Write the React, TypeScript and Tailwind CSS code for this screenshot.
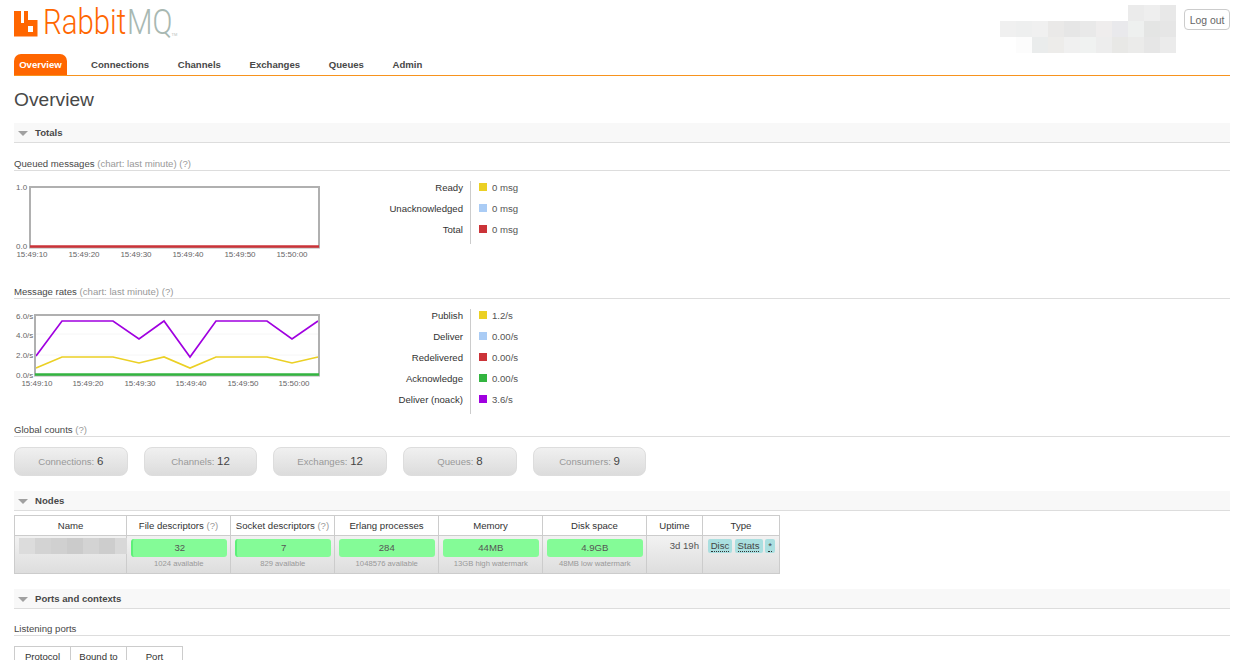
const font = "font-['Liberation_Sans',Arial,sans-serif]";

const tabs = ["Connections", "Channels", "Exchanges", "Queues", "Admin"];

const blurRows = [
  ["#ebebeb", "#eeeeee", "#e8e8e8"],
  ["#f0f0f0", "#eeefef", "#f0f0f0", "#eae9e8", "#e6e6e6", "#e9e9e9", "#efeded", "#e9e9ec", "#eef0ef", "#e4e5e4", "#e6e6e6"],
  ["#fcfcfc", "#eaecec", "#edecea", "#f0f0f0", "#f0f2f1", "#ededed", "#e8e8e6", "#ebebea", "#e6e6e6", "#ebebeb"],
];

const nameBlur = ["#dcdcdc", "#d3d3d3", "#d0d0d0", "#cbcbcb", "#d3d3d3", "#cdcdcd", "#d8d8d8"];

function Logo() {
  return (
    <div className="flex items-start">
      <svg width="24" height="26" viewBox="0 0 24 26" className="mt-[11px] shrink-0">
        <path
          fill="#ff6600"
          fillRule="evenodd"
          d="M0 0H7V12H10V0H14V9H23.5V25.5H0ZM14 15V21H19V15Z"
        />
      </svg>
      <div className="mt-[3px] ml-[4.5px] flex h-[40px] w-[128px] origin-left scale-x-[0.84] items-start font-['Roboto',sans-serif] text-[35px] leading-[40px] font-light">
        <span className="text-[#ff6600]">Rabbit</span>
        <span className="ml-[1px] text-[#a8b8b2]">MQ</span>
      </div>
      <span className="mt-[33px] ml-[1px] text-[4px] leading-[4px] text-[#b4c0bb]">TM</span>
    </div>
  );
}

function Section({ title }: { title: string }) {
  return (
    <div className="flex h-[20px] items-center border-b border-[#dddddd] bg-[#f8f8f8] pl-[4px]">
      <svg width="10" height="5" viewBox="0 0 10 5" className="mt-[1px]">
        <path d="M0 0H10L5 5Z" fill="#a0a0a0" />
      </svg>
      <span className="mt-px ml-[7px] text-[9.6px] font-bold text-[#484848]">{title}</span>
    </div>
  );
}

function SubHead({ title, note, help = true }: { title: string; note?: string; help?: boolean }) {
  return (
    <div className="h-[14px] border-b border-[#dddddd] text-[9.6px] leading-[14px] text-[#484848]">
      {title}{" "}
      {help && <span className="text-[#999999]">{note ? `(${note}) ` : ""}(?)</span>}
    </div>
  );
}

function Legend({ rows }: { rows: { label: string; value: string; color: string }[] }) {
  return (
    <div className="text-[9.6px] leading-[14px]">
      {rows.map((r) => (
        <div key={r.label} className="flex h-[21px]">
          <div className="w-[143px] text-right text-[#333333]">{r.label}</div>
          <div className="ml-[7px] flex items-start border-l border-[#cccccc] pl-[8px]">
            <span className="mt-[2px] mr-[5px] h-[8px] w-[8px]" style={{ backgroundColor: r.color }} />
            <span className="text-[#555555]">{r.value}</span>
          </div>
        </div>
      ))}
    </div>
  );
}

function QueuedChart() {
  const ticks = [18, 70, 122, 174, 226, 278];
  const labels = ["15:49:10", "15:49:20", "15:49:30", "15:49:40", "15:49:50", "15:50:00"];
  return (
    <svg width="306" height="82" viewBox="0 0 306 82" className="shrink-0">
      <rect x="16" y="6" width="289" height="60.5" fill="#fff" stroke="#b0b0b0" strokeWidth="2" />
      <line x1="16" x2="305" y1="65.5" y2="65.5" stroke="#cb3338" strokeWidth="2.5" />
      <g fontSize="8" fill="#666" fontFamily="Liberation Sans">
        <text x="2" y="9">1.0</text>
        <text x="2" y="68">0.0</text>
        {labels.map((t, i) => (
          <text key={t} x={ticks[i]} y="76" textAnchor="middle">{t}</text>
        ))}
      </g>
    </svg>
  );
}

function RatesChart() {
  const ticks = [23, 74, 126, 177, 229, 280];
  const labels = ["15:49:10", "15:49:20", "15:49:30", "15:49:40", "15:49:50", "15:50:00"];
  const purple = "22,47 48,12 99,12 125,30 150,12 176,48 202,12 253,12 278,30 304,12";
  const yellow = "22,59 48,48 99,48 125,54 150,48 176,59 202,48 253,48 278,54 304,48";
  return (
    <svg width="306" height="82" viewBox="0 0 306 82" className="shrink-0">
      <rect x="21" y="6" width="284" height="60.5" fill="#fff" />
      <line x1="22" x2="304" y1="25" y2="25" stroke="#f6f6f6" />
      <line x1="22" x2="304" y1="46" y2="46" stroke="#f6f6f6" />
      <polyline points={yellow} fill="none" stroke="#ebd024" strokeWidth="1.7" />
      <polyline points={purple} fill="none" stroke="#a000e0" strokeWidth="1.7" />
      <rect x="21" y="6" width="284" height="60.5" fill="none" stroke="#b0b0b0" strokeWidth="2" />
      <line x1="21" x2="305" y1="65.5" y2="65.5" stroke="#33b540" strokeWidth="2.5" />
      <g fontSize="8" fill="#666" fontFamily="Liberation Sans">
        <text x="2" y="10">6.0/s</text>
        <text x="2" y="29">4.0/s</text>
        <text x="2" y="49">2.0/s</text>
        <text x="2" y="69">0.0/s</text>
        {labels.map((t, i) => (
          <text key={t} x={ticks[i]} y="77" textAnchor="middle">{t}</text>
        ))}
      </g>
    </svg>
  );
}

function Pill({ label, value }: { label: string; value: number }) {
  return (
    <div className="flex h-[29px] w-[113.6px] items-center justify-center rounded-[8px] border border-[#dddddd] bg-gradient-to-b from-[#f0f0f0] to-[#dcdcdc] pt-px text-[9.6px] text-[#999999]">
      <span className="mt-[1px]">{label}:&nbsp;</span>
      <span className="text-[11.5px] text-[#444444]">{value}</span>
    </div>
  );
}

function BarCell({ value, sub, strip }: { value: string; sub: string; strip?: boolean }) {
  return (
    <td className="border border-[#cccccc] pt-[3px] pr-[3.5px] pl-[4px] align-top">
      <div
        className={`flex h-[18px] items-center justify-center rounded-[3px] bg-[#84fb97] text-[9.6px] text-[#555555] ${strip ? "border-l-[2px] border-[#5cf078]" : ""}`}
      >
        {value}
      </div>
      <div className="mt-[1px] text-center text-[7.68px] leading-[11px] text-[#999999]">{sub}</div>
    </td>
  );
}

function Tag({ text, width }: { text: string; width: string }) {
  return (
    <span className={`block h-[14px] rounded-[2px] bg-[#aadfe0] text-center text-[9.6px] leading-[13px] text-[#444444] ${width}`}>
      <span className="border-b border-dotted border-[#333333]">{text}</span>
    </span>
  );
}

export default function App() {
  const th = "border border-[#cccccc] pt-px text-center font-normal text-[#333333]";
  return (
    <div className={`${font} h-[660px] w-[1245px] overflow-hidden bg-white pr-[15px] pl-[14px]`}>
      <header className="flex h-[54px] items-start justify-between">
        <Logo />
        <div className="flex items-start">
          <div className="mt-[5px] flex flex-col items-end">
            {blurRows.map((row, i) => (
              <div key={i} className="flex">
                {row.map((c, j) => (
                  <span key={j} className="h-[16px] w-[16px]" style={{ backgroundColor: c }} />
                ))}
              </div>
            ))}
          </div>
          <button className="mt-[9px] ml-[8px] h-[21px] w-[46px] rounded-[4px] border border-[#cccccc] bg-white pt-[2px] text-[10.4px] text-[#666666]">
            Log out
          </button>
        </div>
      </header>

      <nav className="flex h-[22px] items-stretch border-b border-[#f7931e] pt-px text-[9.6px] font-bold text-[#484848]">
        <div className="-mt-px flex w-[53px] items-center justify-center rounded-t-[7px] bg-[#ff6600] pt-px text-white">Overview</div>
        <div className="ml-[24px] flex items-center gap-[28.6px]">
          {tabs.map((t) => (
            <span key={t}>{t}</span>
          ))}
        </div>
      </nav>

      <h1 className="mt-[12px] h-[24px] text-[19.2px] leading-[24px] font-normal text-[#484848]">Overview</h1>

      <div className="mt-[11px]">
        <Section title="Totals" />
      </div>

      <div className="mt-[14px]">
        <SubHead title="Queued messages" note="chart: last minute" />
      </div>
      <div className="mt-[10px] flex h-[104px] items-start">
        <QueuedChart />
        <Legend
          rows={[
            { label: "Ready", value: "0 msg", color: "#ebd024" },
            { label: "Unacknowledged", value: "0 msg", color: "#aaccf5" },
            { label: "Total", value: "0 msg", color: "#cb3338" },
          ]}
        />
      </div>

      <SubHead title="Message rates" note="chart: last minute" />
      <div className="mt-[10px] flex h-[114px] items-start">
        <RatesChart />
        <Legend
          rows={[
            { label: "Publish", value: "1.2/s", color: "#ebd024" },
            { label: "Deliver", value: "0.00/s", color: "#aaccf5" },
            { label: "Redelivered", value: "0.00/s", color: "#cb3338" },
            { label: "Acknowledge", value: "0.00/s", color: "#33b540" },
            { label: "Deliver (noack)", value: "3.6/s", color: "#a000e0" },
          ]}
        />
      </div>

      <SubHead title="Global counts" />
      <div className="mt-[10px] flex gap-[16.1px]">
        <Pill label="Connections" value={6} />
        <Pill label="Channels" value={12} />
        <Pill label="Exchanges" value={12} />
        <Pill label="Queues" value={8} />
        <Pill label="Consumers" value={9} />
      </div>

      <div className="mt-[15px]">
        <Section title="Nodes" />
      </div>

      <table className="mt-[4px] w-[765px] table-fixed border-collapse text-[9.6px]">
        <thead>
          <tr className="h-[20px]">
            <th className={`${th} w-[112px]`}>Name</th>
            <th className={`${th} w-[104px]`}>File descriptors <span className="text-[#999999]">(?)</span></th>
            <th className={`${th} w-[104px]`}>Socket descriptors <span className="text-[#999999]">(?)</span></th>
            <th className={`${th} w-[104px]`}>Erlang processes</th>
            <th className={`${th} w-[104px]`}>Memory</th>
            <th className={`${th} w-[104px]`}>Disk space</th>
            <th className={`${th} w-[56px]`}>Uptime</th>
            <th className={`${th} w-[77px]`}>Type</th>
          </tr>
        </thead>
        <tbody>
          <tr className="h-[38px] bg-gradient-to-b from-[#f2f2f2] to-[#dddddd]">
            <td className="border border-[#cccccc] pt-[2px] pl-[4px] align-top">
              <div className="flex w-[108px] overflow-hidden">
                {nameBlur.map((c, i) => (
                  <span key={i} className="h-[16px] w-[16px] shrink-0" style={{ backgroundColor: c }} />
                ))}
              </div>
            </td>
            <BarCell value="32" sub="1024 available" strip />
            <BarCell value="7" sub="829 available" strip />
            <BarCell value="284" sub="1048576 available" />
            <BarCell value="44MB" sub="13GB high watermark" />
            <BarCell value="4.9GB" sub="48MB low watermark" />
            <td className="border border-[#cccccc] pt-[3px] pr-[3px] text-right align-top text-[#555555]">3d 19h</td>
            <td className="border border-[#cccccc] pt-[3px] pl-[5px] align-top">
              <div className="flex gap-[2.5px]">
                <Tag text="Disc" width="w-[24px]" />
                <Tag text="Stats" width="w-[28px]" />
                <Tag text="*" width="w-[10px]" />
              </div>
            </td>
          </tr>
        </tbody>
      </table>

      <div className="mt-[15px]">
        <Section title="Ports and contexts" />
      </div>

      <div className="mt-[13px]">
        <SubHead title="Listening ports" help={false} />
      </div>

      <table className="mt-[10px] w-[168px] table-fixed border-collapse text-[9.6px]">
        <thead>
          <tr className="h-[20px]">
            <th className={`${th} w-[56px]`}>Protocol</th>
            <th className={`${th} w-[56px]`}>Bound to</th>
            <th className={`${th} w-[56px]`}>Port</th>
          </tr>
        </thead>
      </table>
    </div>
  );
}
